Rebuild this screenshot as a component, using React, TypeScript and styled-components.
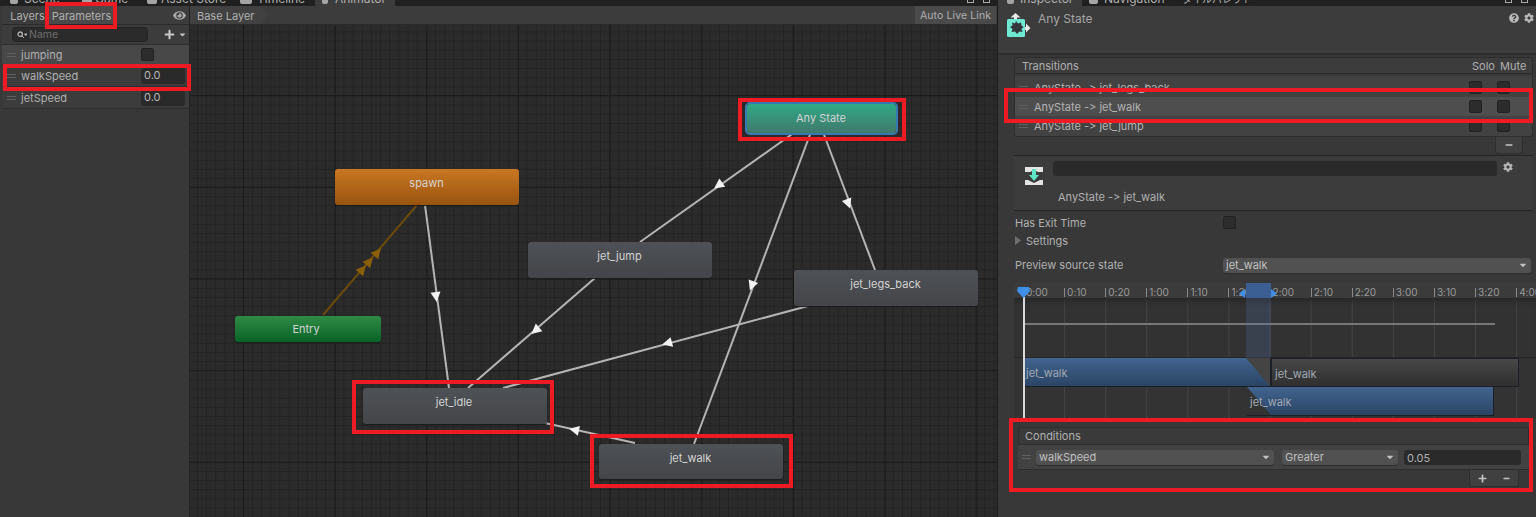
import React from "react";
import styled, { createGlobalStyle } from "styled-components";
import { FaCog, FaEye, FaQuestionCircle, FaCaretDown, FaPlus, FaMinus } from "react-icons/fa";

const Global = createGlobalStyle`
  html, body { margin: 0; padding: 0; background: #383838; overflow: hidden; }
  * { box-sizing: border-box; }
`;

const Page = styled.div`
  position: relative;
  width: 1536px;
  height: 517px;
  overflow: hidden;
  display: grid;
  grid-template-columns: 998px 538px;
  font-family: Inter, "Noto Sans CJK JP", "Liberation Sans", sans-serif;
  font-size: 11px;
  font-variant-ligatures: none;
  font-feature-settings: "calt" 0, "liga" 0;
  color: #b0b0b0;
  background: #383838;
`;
const Dock = styled.div`
  display: flex;
  flex-direction: column;
  height: 517px;
  min-width: 0;
`;
const TabStrip = styled.div`
  height: 6px;
  flex: none;
  display: flex;
  align-items: flex-end;
  background: #202020;
  overflow: hidden;
  position: relative;
`;
const Tab = styled.div<{ $w: number; $active?: boolean; $pad: number; $small?: boolean }>`
  flex: none;
  width: ${(p) => p.$w}px;
  height: 6px;
  padding-left: ${(p) => p.$pad}px;
  background: ${(p) => (p.$active ? "#3c3c3c" : "transparent")};
  display: flex;
  align-items: flex-end;
  white-space: nowrap;
  font-size: ${(p) => (p.$small ? 10 : 12)}px;
  line-height: 12px;
  color: #b0b0b0;
`;
const TabGlyph = styled.div<{ $w: number; $gap: number }>`
  flex: none;
  width: ${(p) => p.$w}px;
  height: 4px;
  margin: 0 ${(p) => p.$gap}px 2px 0;
  background: #a4a4a4;
  border-radius: 0 0 2px 2px;
`;
const TabText = styled.span`
  display: block;
  transform: translateY(-1px);
`;
const StripTools = styled.div<{ $left: number }>`
  position: absolute;
  left: ${(p) => p.$left}px;
  top: 0;
  display: flex;
  gap: 9px;
`;
const StripIcon = styled.div`
  width: 7px;
  height: 3px;
  border: 1px solid #aaa;
  border-top: none;
`;
const Body = styled.div`
  flex: 1;
  display: flex;
  min-height: 0;
  border-right: 1px solid #1c1c1c;
`;
const ParamPanel = styled.div`
  width: 190px;
  flex: none;
  padding-left: 2px;
  background: #383838;
  border-right: 1px solid #232323;
  display: flex;
  flex-direction: column;
`;
const Toolbar = styled.div`
  height: 19px;
  flex: none;
  display: flex;
  align-items: center;
  background: #3c3c3c;
  border-bottom: 1px solid #2a2a2a;
`;
const ToolTab = styled.div<{ $active?: boolean; $w: number; $pl?: number }>`
  width: ${(p) => p.$w}px;
  height: 18px;
  padding-left: ${(p) => p.$pl ?? 0}px;
  line-height: 20px;
  text-align: center;
  background: ${(p) => (p.$active ? "#4a4a4a" : "transparent")};
`;
const EyeSlot = styled.div`
  margin-left: auto;
  margin-right: 3px;
  display: flex;
  color: #a8a8a8;
  font-size: 13px;
`;
const SearchRow = styled.div`
  height: 20px;
  flex: none;
  display: flex;
  align-items: center;
  padding-left: 10px;
  background: #3c3c3c;
  border-bottom: 1px solid #2e2e2e;
`;
const SearchBox = styled.div`
  width: 136px;
  height: 15px;
  border-radius: 4px;
  background: #2b2b2b;
  border: 1px solid #232323;
  display: flex;
  align-items: center;
  gap: 2px;
  padding-left: 4px;
  color: #6e6e6e;
  font-size: 10.5px;
`;
const AddGroup = styled.div`
  margin-left: 16px;
  display: flex;
  align-items: center;
  gap: 3px;
  color: #c8c8c8;
`;
const ParamRow = styled.div<{ $h: number; $alt?: boolean }>`
  height: ${(p) => p.$h}px;
  flex: none;
  display: flex;
  align-items: center;
  padding-left: 5px;
  background: ${(p) => (p.$alt ? "#484848" : "#3c3c3c")};
  border-bottom: 1px solid #2e2e2e;
`;
const Handle = styled.div<{ $w?: number }>`
  flex: none;
  width: ${(p) => p.$w ?? 9}px;
  height: 4px;
  border-top: 1px solid #606060;
  border-bottom: 1px solid #606060;
`;
const ParamName = styled.span`
  margin-left: 5px;
  width: 120px;
  font-size: 11px;
`;
const Check = styled.div`
  flex: none;
  width: 13px;
  height: 13px;
  border-radius: 2px;
  background: #2c2c2c;
  border: 1px solid #222;
`;
const NumField = styled.div`
  width: 44px;
  height: 16px;
  line-height: 15px;
  border-radius: 3px;
  background: #2a2a2a;
  padding-left: 3px;
  color: #b8b8b8;
`;
const GraphColumn = styled.div`
  flex: 1;
  min-width: 0;
  display: flex;
  flex-direction: column;
`;
const Crumbs = styled.div`
  height: 19px;
  flex: none;
  display: flex;
  align-items: center;
  justify-content: space-between;
  background: #3c3c3c;
  border-bottom: 1px solid #2a2a2a;
  padding-right: 1px;
`;
const Crumb = styled.div`
  padding-left: 7px;
  width: 78px;
  height: 18px;
  line-height: 20px;
  background: #414141;
  clip-path: polygon(0 0, 70px 0, 78px 50%, 70px 100%, 0 100%);
`;
const LiveButton = styled.div`
  width: 81px;
  height: 18px;
  line-height: 19px;
  text-align: center;
  background: #4a4a4a;
  font-size: 10.5px;
  letter-spacing: 0.1px;
`;
const Canvas = styled.div`
  position: relative;
  flex: 1;
  overflow: hidden;
  background-color: #2b2b2b;
  background-image:
    linear-gradient(to right, #1b1b1b 1px, transparent 1px),
    linear-gradient(to bottom, #1b1b1b 1px, transparent 1px),
    linear-gradient(to right, #232323 1px, transparent 1px),
    linear-gradient(to bottom, #232323 1px, transparent 1px);
  background-size: 91.7px 91.7px, 91.7px 91.7px, 9.17px 9.17px, 9.17px 9.17px;
  background-position: 53px 0, 0 70px, 7px 0, 0 6.5px;
`;
const EdgeLayer = styled.svg`
  position: absolute;
  left: 0;
  top: 0;
  width: 807px;
  height: 492px;
`;
const tones = {
  gray: "linear-gradient(#4e5155, #434549)",
  orange: "linear-gradient(#c97722, #98540f)",
  green: "linear-gradient(#2f8a45, #0a6327)",
  teal: "linear-gradient(#2fa985, #41796d)",
};
const StateNode = styled.div<{ $x: number; $y: number; $w: number; $h: number; $tone: keyof typeof tones; $sel?: boolean; $shift?: number }>`
  position: absolute;
  left: ${(p) => p.$x - 190}px;
  top: ${(p) => p.$y - 25}px;
  width: ${(p) => p.$w}px;
  height: ${(p) => p.$h}px;
  border-radius: 3px;
  background: ${(p) => tones[p.$tone]};
  box-shadow: ${(p) => (p.$sel ? "0 0 0 2px #3878b0" : "0 1px 1px #1c1c1c")};
  padding-top: ${(p) => (p.$h > 28 ? 7 : 6)}px;
  padding-right: ${(p) => p.$shift ?? 1}px;
  line-height: 14px;
  text-align: center;
  color: #d4d4d4;
  font-size: 11px;
`;
const Inspector = styled.div`
  flex: 1;
  display: flex;
  flex-direction: column;
  background: #383838;
  min-height: 0;
`;
const InspectorHead = styled.div`
  height: 49px;
  flex: none;
  display: flex;
  align-items: flex-start;
  padding: 7px 2px 0 8px;
  background: #3c3c3c;
  border-bottom: 2px solid #2e2e2e;
`;
const HeadName = styled.div`
  margin-left: 7px;
  font-size: 12px;
  line-height: 12px;
  color: #a4a4a4;
  flex: 1;
`;
const HeadTools = styled.div`
  display: flex;
  gap: 5px;
  color: #b8b8b8;
  font-size: 10px;
`;
const Section = styled.div`
  margin: 2px 3px 0 16px;
  flex: none;
`;
const ListHead = styled.div`
  height: 17px;
  display: flex;
  align-items: center;
  padding-left: 7px;
  background: #3c3c3c;
  border: 1px solid #2c2c2c;
  border-radius: 3px 3px 0 0;
`;
const ListTitle = styled.span`
  flex: 1;
`;
const HeadLabel = styled.span<{ $w: number }>`
  width: ${(p) => p.$w}px;
`;
const ListBody = styled.div`
  margin-top: 1px;
  height: 62px;
  padding-top: 2px;
  background: #424242;
  border: 1px solid #2e2e2e;
  border-top-color: #383838;
  border-radius: 0 0 3px 3px;
`;
const TransRow = styled.div<{ $sel?: boolean }>`
  height: 19px;
  display: flex;
  align-items: center;
  padding-left: 4px;
  background: ${(p) => (p.$sel ? "#4e4e4e" : "transparent")};
`;
const TransName = styled.span`
  margin-left: 6px;
  width: 435px;
  color: #b4b4b4;
`;
const TransCheck = styled(Check)`
  margin-right: 15px;
`;
const FootButtons = styled.div<{ $w: number; $mr: number }>`
  margin-left: auto;
  margin-right: ${(p) => p.$mr}px;
  width: ${(p) => p.$w}px;
  height: 17px;
  flex: none;
  display: flex;
  align-items: center;
  justify-content: space-around;
  background: #404040;
  border: 1px solid #2e2e2e;
  border-top: none;
  border-radius: 0 0 3px 3px;
  color: #c4c4c4;
  font-size: 8px;
`;
const TransPanel = styled.div`
  margin: 1px 3px 0 16px;
  height: 56px;
  flex: none;
  border-top: 1px solid #242424;
  border-bottom: 1px solid #242424;
  display: grid;
  grid-template-columns: 39px 444px 1fr;
  grid-template-rows: 27px 1fr;
  background: #3c3c3c;
`;
const IconCell = styled.div`
  padding: 10px 0 0 10px;
`;
const NameInput = styled.div`
  margin-top: 5px;
  height: 15px;
  border-radius: 3px;
  background: #2a2a2a;
`;
const GearCell = styled.div`
  padding: 6px 0 0 6px;
  font-size: 10px;
  color: #b4b4b4;
`;
const PanelLabel = styled.div`
  grid-column: 2 / 4;
  padding: 7px 0 0 5px;
`;
const PropRow = styled.div<{ $h: number }>`
  margin-left: 17px;
  margin-right: 5px;
  height: ${(p) => p.$h}px;
  flex: none;
  display: flex;
  align-items: center;
`;
const PropLabel = styled.span`
  width: 208px;
  flex: none;
`;
const Foldout = styled.span`
  display: flex;
  align-items: center;
  gap: 5px;
  margin-left: 0;
`;
const Dropdown = styled.div<{ $w?: number; $ml?: number }>`
  flex: ${(p) => (p.$w ? "none" : "1")};
  width: ${(p) => (p.$w ? `${p.$w}px` : "auto")};
  margin-left: ${(p) => p.$ml ?? 0}px;
  height: 15px;
  display: flex;
  align-items: center;
  justify-content: space-between;
  padding: 0 3px;
  border-radius: 3px;
  background: #515151;
  color: #c0c0c0;
  box-shadow: 0 1px 0 #2c2c2c;
`;
const TimelineBox = styled.div`
  position: relative;
  margin: 0 0 0 16px;
  height: 135px;
  flex: none;
  overflow: hidden;
  background: #323232;
`;
const Ruler = styled.div`
  height: 15px;
  display: flex;
  align-items: flex-end;
  padding: 0 0 1px 9px;
  background: #3b3b3b;
  overflow: hidden;
`;
const Tick = styled.div`
  flex: none;
  width: 41.1px;
  height: 9px;
  border-left: 1px solid #8a8a8a;
  padding-left: 2px;
  font-size: 10px;
  line-height: 8px;
  color: #9a9a9a;
  white-space: nowrap;
`;
const gridLines = `
  background-image: linear-gradient(to right, #444444 1px, transparent 1px);
  background-size: 41.1px 100%;
  background-position: 9px 0;
`;
const Track = styled.div`
  height: 60px;
  padding: 25px 0 0 9px;
  background-color: #323232;
  ${gridLines}
  box-shadow: inset 0 6px 5px -3px #272727;
  border-bottom: 1px solid #242424;
`;
const Curve = styled.div`
  width: 472px;
  height: 2px;
  background: #777;
`;
const Clips = styled.div`
  height: 60px;
  background-color: #333333;
  ${gridLines}
  position: relative;
`;
const ClipRow = styled.div<{ $offset: number }>`
  display: flex;
  height: 29px;
  padding-left: ${(p) => p.$offset}px;
`;
const Clip = styled.div<{ $w: number; $blue?: boolean; $cut?: "tr" | "bl" }>`
  position: relative;
  flex: none;
  width: ${(p) => p.$w}px;
  height: 29px;
  padding: 8px 0 0 3px;
  line-height: 14px;
  color: #a0a8b4;
  overflow: hidden;
  background: ${(p) => (p.$blue ? "linear-gradient(#42648f, #2a4464)" : "linear-gradient(#484848, #2f2f2f)")};
  border: 1px solid #1b1f26;
  border-width: ${(p) => (p.$blue ? "0 1px 1px 0" : "1px")};
  &::after {
    content: "";
    display: ${(p) => (p.$cut ? "block" : "none")};
    position: absolute;
    top: 0;
    bottom: 0;
    ${(p) => (p.$cut === "tr" ? "right: 0;" : "left: 0;")}
    width: 24px;
    background: ${(p) => (p.$cut === "tr" ? "#444" : "#333")};
    clip-path: ${(p) => (p.$cut === "tr" ? "polygon(0 0, 100% 0, 100% 100%)" : "polygon(0 0, 100% 100%, 0 100%)")};
  }
`;
const ClipText = styled.span`
  position: relative;
  z-index: 1;
`;
const BandHead = styled.div`
  position: absolute;
  left: 232px;
  top: 0;
  width: 25px;
  height: 15px;
  background: #3b5f93;
`;
const BandBody = styled.div`
  position: absolute;
  left: 232px;
  top: 15px;
  width: 25px;
  height: 60px;
  background: rgba(80, 120, 180, 0.22);
`;
const Playhead = styled.div`
  position: absolute;
  left: 9px;
  top: 14px;
  width: 2px;
  height: 121px;
  background: #d8d8d8;
`;
const Marker = styled.svg<{ $x: number; $y: number }>`
  position: absolute;
  left: ${(p) => p.$x}px;
  top: ${(p) => p.$y}px;
`;
const ConditionHead = styled.div`
  margin: 9px 7px 0 20px;
  height: 18px;
  line-height: 17px;
  padding-left: 6px;
  background: #3a3a3a;
  border: 1px solid #2e2e2e;
  border-radius: 3px 3px 0 0;
  flex: none;
`;
const ConditionRow = styled.div`
  margin: 0 7px 0 20px;
  height: 25px;
  flex: none;
  display: flex;
  align-items: center;
  padding-left: 4px;
  background: #424242;
  border-bottom: 1px solid #2e2e2e;
`;
const CondField = styled.div`
  margin-left: 6px;
  width: 117px;
  height: 15px;
  line-height: 16px;
  border-radius: 3px;
  padding-left: 3px;
  background: #2a2a2a;
`;
const Annotation = styled.div<{ $x: number; $y: number; $w: number; $h: number }>`
  position: absolute;
  left: ${(p) => p.$x}px;
  top: ${(p) => p.$y}px;
  width: ${(p) => p.$w}px;
  height: ${(p) => p.$h}px;
  border: 4px solid #ed1c24;
  pointer-events: none;
`;

type Edge = { from: [number, number]; to: [number, number]; arrows: [number, number][]; color?: string; head?: string };
const edges: Edge[] = [
  { from: [425, 205], to: [449, 388], arrows: [[436, 296]] },
  { from: [323, 315], to: [417, 205], arrows: [[362, 270], [369, 262], [377, 253]], color: "#6b4a0c", head: "#8a5f0a" },
  { from: [795, 132], to: [640, 242], arrows: [[719, 185]] },
  { from: [595, 278], to: [468, 388], arrows: [[536, 330]] },
  { from: [808, 306], to: [503, 388], arrows: [[668, 343]] },
  { from: [823, 132], to: [875, 270], arrows: [[848, 203]] },
  { from: [811, 132], to: [694, 444], arrows: [[752, 285]] },
  { from: [635, 443], to: [545, 423], arrows: [[575, 430]] },
];

function EdgeLine({ e }: { e: Edge }) {
  const [x1, y1] = e.from;
  const [x2, y2] = e.to;
  const angle = (Math.atan2(y2 - y1, x2 - x1) * 180) / Math.PI;
  const color = e.color ?? "#b4b4b4";
  const head = e.head ?? "#f2f2f2";
  return (
    <g transform="translate(-190 -25)">
      <line x1={x1} y1={y1} x2={x2} y2={y2} stroke={color} strokeWidth={2} />
      {e.arrows.map(([x, y]) => (
        <polygon key={x} points="6,0 -4,-5 -4,5" fill={head} transform={`translate(${x} ${y}) rotate(${angle})`} />
      ))}
    </g>
  );
}

const nodes: { label: string; x: number; y: number; w: number; h: number; tone: keyof typeof tones; sel?: boolean; shift?: number }[] = [
  { label: "spawn", x: 335, y: 169, w: 184, h: 36, tone: "orange" },
  { label: "Entry", x: 235, y: 316, w: 146, h: 26, tone: "green", shift: 4 },
  { label: "jet_jump", x: 528, y: 242, w: 184, h: 36, tone: "gray" },
  { label: "Any State", x: 747, y: 104, w: 149, h: 29, tone: "teal", sel: true },
  { label: "jet_legs_back", x: 794, y: 270, w: 184, h: 36, tone: "gray" },
  { label: "jet_idle", x: 363, y: 388, w: 184, h: 36, tone: "gray", shift: 2 },
  { label: "jet_walk", x: 599, y: 444, w: 184, h: 35, tone: "gray" },
];

const ticks = ["0:00", "0:10", "0:20", "1:00", "1:10", "1:20", "2:00", "2:10", "2:20", "3:00", "3:10", "3:20", "4:00"];

const AnyStateIcon = () => (
  <svg width="25" height="25" viewBox="0 0 25 25">
    <path d="M9.500 0l-5 4.500h10zM20 10.500v9l4.500-4.500z" fill="#e8e8e8" />
    <rect x="8" y="4" width="3" height="3" fill="#e8e8e8" />
    <rect x="18" y="14" width="3" height="3" fill="#e8e8e8" />
    <rect x="1" y="6" width="18" height="18" rx="1.500" fill="#6fe8d2" />
    <path d="M10 8l2 2.500 3-1 .5 3 2 1.500-2 2 1 3-3-.5-2.500 2.500-2-2.500-3.500.5 1-3-2.500-2 2.500-1.500-.5-3 3 1z" fill="#33353a" />
  </svg>
);
const TransitionIcon = () => (
  <svg width="20" height="20" viewBox="0 0 20 20">
    <path d="M1 1h18v5h-5l-2-1H8L6 6H1zM1 19v-5h3l6 3 6-3h3v5z" fill="#e4e4e4" />
    <path d="M8 3h4v6h3l-5 6-5-6h3z" fill="#5fe6c8" />
  </svg>
);
const SearchGlyph = () => (
  <svg width="10" height="8" viewBox="0 0 10 8">
    <circle cx="3.200" cy="3.200" r="2.200" fill="none" stroke="#b0b0b0" strokeWidth="1.300" />
    <path d="M5 5l2 2M7.500 3h2.500l-1.200 1.500z" stroke="#b0b0b0" fill="#b0b0b0" />
  </svg>
);
const FoldArrow = () => (
  <svg width="6" height="9" viewBox="0 0 6 9">
    <path d="M0 0l6 4.500L0 9z" fill="#6e6e6e" />
  </svg>
);

export default function App() {
  return (
    <Page>
      <Global />
      <Dock>
        <TabStrip>
          <Tab $w={80} $pad={10}><TabGlyph $w={8} $gap={6} /><TabText>Scene</TabText></Tab>
          <Tab $w={65} $pad={2}><TabGlyph $w={10} $gap={3} /><TabText>Game</TabText></Tab>
          <Tab $w={93} $pad={2}><TabGlyph $w={10} $gap={4} /><TabText>Asset Store</TabText></Tab>
          <Tab $w={77} $pad={2}><TabGlyph $w={12} $gap={5} /><TabText>Timeline</TabText></Tab>
          <Tab $w={80} $pad={7} $active><TabGlyph $w={6} $gap={7} /><TabText>Animator</TabText></Tab>
          <StripTools $left={967}><StripIcon /><StripIcon /></StripTools>
        </TabStrip>
        <Body>
          <ParamPanel>
            <Toolbar>
              <ToolTab $w={46} $pl={5}>Layers</ToolTab>
              <ToolTab $w={67} $active>Parameters</ToolTab>
              <EyeSlot><FaEye /></EyeSlot>
            </Toolbar>
            <SearchRow>
              <SearchBox><SearchGlyph />Name</SearchBox>
              <AddGroup>
                <FaPlus size={11} />
                <FaCaretDown size={9} />
              </AddGroup>
            </SearchRow>
            <ParamRow $h={20} $alt>
              <Handle /><ParamName>jumping</ParamName><Check />
            </ParamRow>
            <ParamRow $h={22}>
              <Handle /><ParamName>walkSpeed</ParamName><NumField>0.0</NumField>
            </ParamRow>
            <ParamRow $h={22}>
              <Handle /><ParamName>jetSpeed</ParamName><NumField>0.0</NumField>
            </ParamRow>
          </ParamPanel>
          <GraphColumn>
            <Crumbs>
              <Crumb>Base Layer</Crumb>
              <LiveButton>Auto Live Link</LiveButton>
            </Crumbs>
            <Canvas>
              <EdgeLayer viewBox="0 0 807 492">
                {edges.map((e) => <EdgeLine key={e.from.join()} e={e} />)}
              </EdgeLayer>
              {nodes.map((n) => (
                <StateNode key={n.label} $x={n.x} $y={n.y} $w={n.w} $h={n.h} $tone={n.tone} $sel={n.sel} $shift={n.shift}>
                  {n.label}
                </StateNode>
              ))}
            </Canvas>
          </GraphColumn>
        </Body>
      </Dock>
      <Dock>
        <TabStrip>
          <Tab $w={84} $pad={9} $active><TabGlyph $w={7} $gap={6} /><TabText>Inspector</TabText></Tab>
          <Tab $w={100} $pad={7}><TabGlyph $w={9} $gap={6} /><TabText>Navigation</TabText></Tab>
          <Tab $w={120} $pad={0} $small><TabText>タイルパレット</TabText></Tab>
          <StripTools $left={507}><StripIcon /><StripIcon /></StripTools>
        </TabStrip>
        <Inspector>
          <InspectorHead>
            <AnyStateIcon />
            <HeadName>Any State</HeadName>
            <HeadTools><FaQuestionCircle /><FaCog /></HeadTools>
          </InspectorHead>
          <Section>
            <ListHead>
              <ListTitle>Transitions</ListTitle>
              <HeadLabel $w={28}>Solo</HeadLabel>
              <HeadLabel $w={32}>Mute</HeadLabel>
            </ListHead>
            <ListBody>
              <TransRow><Handle /><TransName>AnyState -&gt; jet_legs_back</TransName><TransCheck /><TransCheck /></TransRow>
              <TransRow $sel><Handle /><TransName>AnyState -&gt; jet_walk</TransName><TransCheck /><TransCheck /></TransRow>
              <TransRow><Handle /><TransName>AnyState -&gt; jet_jump</TransName><TransCheck /><TransCheck /></TransRow>
            </ListBody>
            <FootButtons $w={28} $mr={10}><FaMinus /></FootButtons>
          </Section>
          <TransPanel>
            <IconCell><TransitionIcon /></IconCell>
            <NameInput />
            <GearCell><FaCog /></GearCell>
            <div />
            <PanelLabel>AnyState -&gt; jet_walk</PanelLabel>
          </TransPanel>
          <PropRow $h={23}>
            <PropLabel>Has Exit Time</PropLabel>
            <Check />
          </PropRow>
          <PropRow $h={13}>
            <Foldout><FoldArrow />Settings</Foldout>
          </PropRow>
          <PropRow $h={36}>
            <PropLabel>Preview source state</PropLabel>
            <Dropdown>jet_walk<FaCaretDown size={10} /></Dropdown>
          </PropRow>
          <TimelineBox>
            <Ruler>
              {ticks.map((t) => <Tick key={t}>{t}</Tick>)}
            </Ruler>
            <Track><Curve /></Track>
            <Clips>
              <ClipRow $offset={9}>
                <Clip $w={248} $blue $cut="tr"><ClipText>jet_walk</ClipText></Clip>
                <Clip $w={248}><ClipText>jet_walk</ClipText></Clip>
              </ClipRow>
              <ClipRow $offset={233}>
                <Clip $w={247} $blue $cut="bl"><ClipText>jet_walk</ClipText></Clip>
              </ClipRow>
            </Clips>
            <BandHead />
            <BandBody />
            <Playhead />
            <Marker $x={3} $y={4} width="13" height="11" viewBox="0 0 13 11">
              <path d="M1 0h11l1 4-6.500 7L0 4z" fill="#3f8fe8" />
            </Marker>
            <Marker $x={225} $y={6} width="6" height="9" viewBox="0 0 6 9">
              <path d="M6 0v9L0 4.500z" fill="#3f8fe8" />
            </Marker>
            <Marker $x={257} $y={6} width="6" height="9" viewBox="0 0 6 9">
              <path d="M0 0v9l6-4.500z" fill="#3f8fe8" />
            </Marker>
          </TimelineBox>
          <ConditionHead>Conditions</ConditionHead>
          <ConditionRow>
            <Handle />
            <Dropdown $w={238} $ml={5}>walkSpeed<FaCaretDown size={10} /></Dropdown>
            <Dropdown $w={116} $ml={8}>Greater<FaCaretDown size={10} /></Dropdown>
            <CondField>0.05</CondField>
          </ConditionRow>
          <FootButtons $w={50} $mr={17}><FaPlus size={9} /><FaMinus size={7} /></FootButtons>
        </Inspector>
      </Dock>
      <Annotation $x={45} $y={2} $w={72} $h={27} />
      <Annotation $x={3} $y={64} $w={188} $h={27} />
      <Annotation $x={738} $y={98} $w={168} $h={43} />
      <Annotation $x={352} $y={380} $w={202} $h={54} />
      <Annotation $x={590} $y={434} $w={203} $h={54} />
      <Annotation $x={1004} $y={88} $w={529} $h={35} />
      <Annotation $x={1009} $y={418} $w={524} $h={74} />
    </Page>
  );
}
